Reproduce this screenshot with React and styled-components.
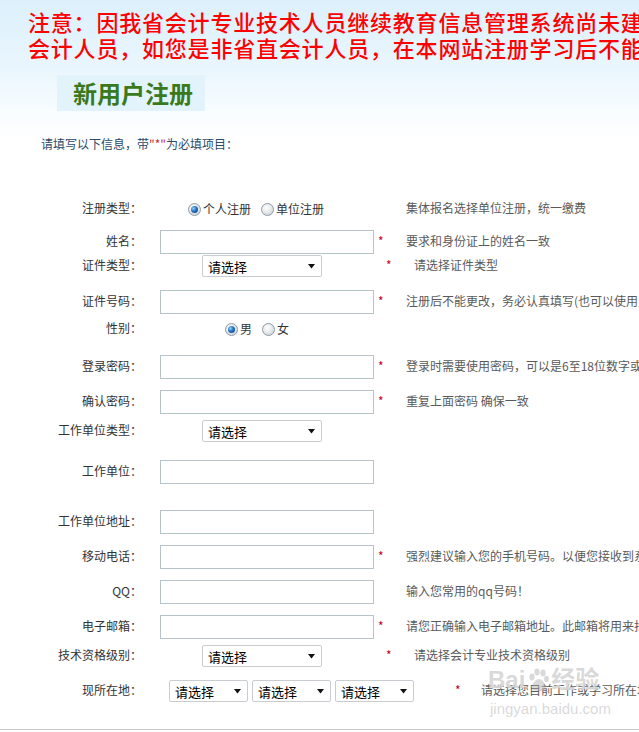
import React from "react";
import styled, { createGlobalStyle } from "styled-components";

const Global = createGlobalStyle`
  html, body { margin: 0; padding: 0; background: #fff; }
  body { font-family: "Noto Sans CJK SC", "Noto Sans", sans-serif; }
  * { box-sizing: border-box; }
`;

const Page = styled.div`
  position: relative;
  width: 639px;
  height: 732px;
  overflow: hidden;
  background: linear-gradient(#dcf0fc 0px, #eaf6fd 70px, #f7fcff 110px, #ffffff 140px);
`;

const Notice = styled.div`
  padding: 8px 0 0 28px;
  color: #ff0000;
  font-size: 22px;
  line-height: 26px;
  letter-spacing: 0.8px;
  font-weight: 500;
  white-space: nowrap;
`;

const TitleWrap = styled.div`
  padding-left: 57px;
  margin-top: 15px;
`;

const Title = styled.h1`
  display: inline-block;
  margin: 0;
  height: 36px;
  padding: 0 12px 0 16px;
  background: #e2f3fc;
  color: #3a7a1c;
  font-size: 24px;
  line-height: 36px;
  font-weight: 700;
`;

const Intro = styled.p`
  margin: 25px 0 0;
  padding-left: 41px;
  font-size: 12px;
  line-height: 16px;
  color: #2b4a68;
`;

const Mark = styled.span`
  color: #c03040;
`;

const Form = styled.div`
  padding-top: 45px;
`;

const Row = styled.div`
  display: flex;
  align-items: center;
  height: 24px;
  margin-top: ${(p) => p.$top || 0}px;
  font-size: 12px;
  white-space: nowrap;
`;

const Label = styled.div`
  width: 142px;
  flex: none;
  text-align: right;
  color: #333;
  line-height: 16px;
  margin-top: -2px;
`;

const Field = styled.div`
  flex: none;
  margin-left: 18px;
  width: ${(p) => p.$w || 214}px;
  padding-left: ${(p) => p.$pl || 0}px;
  display: flex;
  align-items: center;
  gap: ${(p) => p.$gap || 0}px;
`;

const TextInput = styled.input`
  width: 214px;
  height: 24px;
  margin: 0;
  border: 1px solid #b7c3cb;
  background: #fff;
  outline: none;
  padding: 0 4px;
`;

const Star = styled.div`
  flex: none;
  width: ${(p) => p.$w || 32}px;
  padding-left: ${(p) => p.$pl || 4}px;
  color: #c00020;
  font-size: 12px;
  line-height: 12px;
  margin-top: -3px;
`;

const Hint = styled.div`
  color: #5a5a5a;
  line-height: 16px;
  margin-top: -2px;
`;

const SelectBox = styled.div`
  width: ${(p) => p.$w || 120}px;
  height: 22px;
  border: 1px solid #c9cdd2;
  border-radius: 2px;
  background: #fff;
  display: flex;
  align-items: center;
  justify-content: space-between;
  padding: 0 5px 0 5px;
  color: #000;
  font-size: 13px;
`;

const Caret = () => (
  <svg width="8" height="5" viewBox="0 0 8 5">
    <path d="M0 0H7L3.5 4.5Z" fill="#111" />
  </svg>
);

const Select = ({ w }) => (
  <SelectBox $w={w}>
    <span>请选择</span>
    <Caret />
  </SelectBox>
);

const RadioDot = styled.span`
  position: relative;
  flex: none;
  width: 13px;
  height: 13px;
  border-radius: 50%;
  border: 1px solid #8f9ba6;
  background: radial-gradient(circle at 40% 35%, #ffffff 0%, #e8eaec 45%, #c4c9ce 100%);
  &::after {
    content: "";
    display: ${(p) => (p.$on ? "block" : "none")};
    position: absolute;
    left: 2px;
    top: 2px;
    width: 7px;
    height: 7px;
    border-radius: 50%;
    background: radial-gradient(circle at 35% 35%, #8fd0ff 0%, #2272c0 45%, #0b3f80 100%);
  }
`;

const RadioLabel = styled.label`
  display: flex;
  align-items: center;
  gap: 2px;
  color: #333;
  line-height: 16px;
`;

const Radio = ({ on, children }) => (
  <RadioLabel>
    <RadioDot $on={on} />
    <span>{children}</span>
  </RadioLabel>
);

const BottomLine = styled.div`
  margin-top: 26px;
  height: 1px;
  background: #c8c8c8;
`;

const Watermark = styled.div`
  position: absolute;
  left: 488px;
  top: 666px;
  color: rgba(170, 170, 170, 0.45);
  font-family: "Liberation Sans", "Noto Sans CJK SC", sans-serif;
  pointer-events: none;
  text-shadow: 0 0 1px rgba(255, 255, 255, 0.9);
`;

const WmTop = styled.div`
  display: flex;
  align-items: center;
  gap: 2px;
  font-size: 24px;
  font-weight: 700;
  line-height: 28px;
`;

const WmBottom = styled.div`
  font-size: 15px;
  line-height: 18px;
  margin-top: 6px;
  padding-left: 2px;
`;

const Paw = () => (
  <svg width="22" height="24" viewBox="0 0 22 24">
    <g fill="rgba(170,170,170,0.45)">
      <ellipse cx="5" cy="9" rx="2.6" ry="3.4" />
      <ellipse cx="10" cy="4" rx="2.6" ry="3.4" />
      <ellipse cx="16" cy="5" rx="2.6" ry="3.4" />
      <ellipse cx="19.5" cy="11" rx="2.4" ry="3.2" />
      <path d="M5 20c0-5 4-9 7-9s6 4 7 8c1 4-3 5-7 4s-7 1-7-3z" />
    </g>
  </svg>
);

export default function App() {
  return (
    <Page>
      <Global />
      <Notice>
        <div>注意：因我省会计专业技术人员继续教育信息管理系统尚未建立</div>
        <div>会计人员，如您是非省直会计人员，在本网站注册学习后不能</div>
      </Notice>
      <TitleWrap>
        <Title>新用户注册</Title>
      </TitleWrap>
      <Intro>
        请填写以下信息，带<Mark>"*"</Mark>为必填项目：
      </Intro>
      <Form>
        <Row>
          <Label>注册类型：</Label>
          <Field $pl={28} $gap={10}>
            <Radio on>个人注册</Radio>
            <Radio>单位注册</Radio>
          </Field>
          <Star />
          <Hint>集体报名选择单位注册，统一缴费</Hint>
        </Row>
        <Row $top={9}>
          <Label>姓名：</Label>
          <Field>
            <TextInput />
          </Field>
          <Star>*</Star>
          <Hint>要求和身份证上的姓名一致</Hint>
        </Row>
        <Row $top={0}>
          <Label>证件类型：</Label>
          <Field $pl={42}>
            <Select />
          </Field>
          <Star $w={40} $pl={12}>*</Star>
          <Hint>请选择证件类型</Hint>
        </Row>
        <Row $top={12}>
          <Label>证件号码：</Label>
          <Field>
            <TextInput />
          </Field>
          <Star>*</Star>
          <Hint>注册后不能更改，务必认真填写(也可以使用身份证号码)</Hint>
        </Row>
        <Row $top={3}>
          <Label>性别：</Label>
          <Field $pl={65} $gap={10}>
            <Radio on>男</Radio>
            <Radio>女</Radio>
          </Field>
        </Row>
        <Row $top={14}>
          <Label>登录密码：</Label>
          <Field>
            <TextInput type="password" />
          </Field>
          <Star>*</Star>
          <Hint>登录时需要使用密码，可以是6至18位数字或字母</Hint>
        </Row>
        <Row $top={11}>
          <Label>确认密码：</Label>
          <Field>
            <TextInput type="password" />
          </Field>
          <Star>*</Star>
          <Hint>重复上面密码 确保一致</Hint>
        </Row>
        <Row $top={5}>
          <Label>工作单位类型：</Label>
          <Field $pl={42}>
            <Select />
          </Field>
        </Row>
        <Row $top={17}>
          <Label>工作单位：</Label>
          <Field>
            <TextInput />
          </Field>
        </Row>
        <Row $top={26}>
          <Label>工作单位地址：</Label>
          <Field>
            <TextInput />
          </Field>
        </Row>
        <Row $top={11}>
          <Label>移动电话：</Label>
          <Field>
            <TextInput />
          </Field>
          <Star>*</Star>
          <Hint>强烈建议输入您的手机号码。以便您接收到系统通知</Hint>
        </Row>
        <Row $top={11}>
          <Label>QQ：</Label>
          <Field>
            <TextInput />
          </Field>
          <Star />
          <Hint>输入您常用的qq号码！</Hint>
        </Row>
        <Row $top={11}>
          <Label>电子邮箱：</Label>
          <Field>
            <TextInput />
          </Field>
          <Star>*</Star>
          <Hint>请您正确输入电子邮箱地址。此邮箱将用来找回密码</Hint>
        </Row>
        <Row $top={5}>
          <Label>技术资格级别：</Label>
          <Field $pl={42}>
            <Select />
          </Field>
          <Star $w={40} $pl={12}>*</Star>
          <Hint>请选择会计专业技术资格级别</Hint>
        </Row>
        <Row $top={11}>
          <Label>现所在地：</Label>
          <Field $w={254} $pl={9} $gap={4}>
            <Select w={79} />
            <Select w={79} />
            <Select w={79} />
          </Field>
          <Star $w={67} $pl={41}>*</Star>
          <Hint>请选择您目前工作或学习所在地</Hint>
        </Row>
      </Form>
      <BottomLine />
      <Watermark>
        <WmTop>
          <span>Bai</span>
          <Paw />
          <span>经验</span>
        </WmTop>
        <WmBottom>jingyan.baidu.com</WmBottom>
      </Watermark>
    </Page>
  );
}
